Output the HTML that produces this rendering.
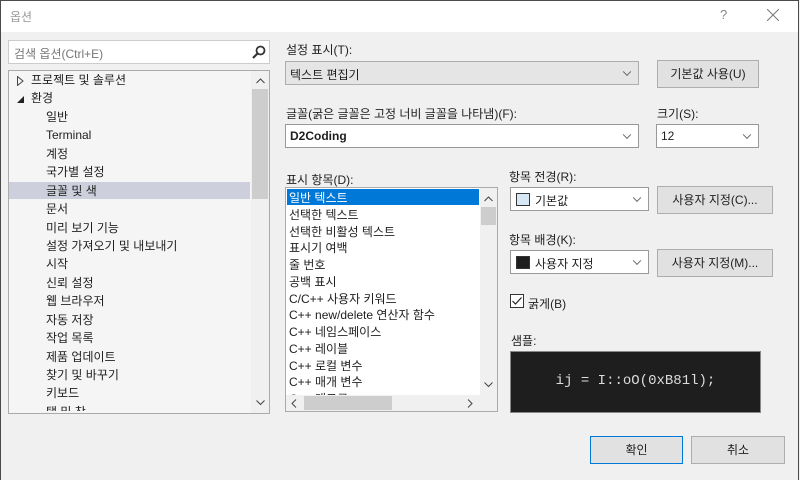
<!DOCTYPE html>
<html><head><meta charset="utf-8"><style>
*{box-sizing:border-box;margin:0;padding:0}
body{width:800px;height:480px;overflow:hidden;background:#f0f0f0;font-family:"Liberation Sans","Noto Sans CJK KR",sans-serif;font-size:12px;color:#1e1e1e;position:relative}
.a{position:absolute}
.frame{left:0;top:0;width:799px;height:480px;border:1px solid #4a4a4a;border-bottom:none}
.title{left:1px;top:1px;width:797px;height:31px;background:#fff}
.combo{background:#fff;border:1px solid #aaa}
.combo.g{background:#e5e5e5;border-color:#adadad}
.chev{position:absolute;right:8px;top:50%;width:6px;height:6px;border-right:1px solid #666;border-bottom:1px solid #666;transform:translateY(-70%) rotate(45deg)}
.btn{background:#e1e1e1;border:1px solid #adadad;text-align:center}
.lbl{white-space:nowrap}
.tree div{height:18.45px;line-height:18px;white-space:nowrap;overflow:hidden}
.list div{height:16.75px;line-height:16px;white-space:nowrap;padding-left:3px}
.sb{background:#f0f0f0}
.th{background:#cdcdcd}
</style></head><body>
<div class="a title"></div>
<div class="a frame"></div>
<div class="a lbl" style="left:10px;top:8px;color:#999;font-size:12px">옵션</div>
<div class="a" style="left:720px;top:7px;color:#888;font-size:13px">?</div>
<svg class="a" style="left:767px;top:9px" width="12" height="12"><path d="M0 0L12 12M12 0L0 12" stroke="#777" stroke-width="1"/></svg>

<div class="a combo" style="left:8px;top:40px;width:262px;height:24px;border-color:#ccc"></div>
<div class="a lbl" style="left:14px;top:45px;color:#777">검색 옵션(Ctrl+E)</div>
<svg class="a" style="left:252px;top:45px" width="14" height="14"><circle cx="8.5" cy="5.5" r="4" fill="none" stroke="#333" stroke-width="1.8"/><path d="M5.5 8.5L1 13" stroke="#333" stroke-width="2.2"/></svg>

<div class="a" style="left:8px;top:70px;width:262px;height:344px;background:#f5f5f5;border:1px solid #aaa"></div>
<div class="a" style="left:9px;top:182px;width:241px;height:17px;background:#cdd0dc"></div>
<div class="a sb" style="left:251px;top:71px;width:18px;height:342px"></div>
<div class="a th" style="left:252px;top:89px;width:16px;height:110px"></div>
<svg class="a" style="left:256px;top:78px" width="9" height="6"><path d="M0.5 5L4.5 1L8.5 5" fill="none" stroke="#444"/></svg>
<svg class="a" style="left:256px;top:400px" width="9" height="6"><path d="M0.5 0.5L4.5 4.5L8.5 0.5" fill="none" stroke="#444"/></svg>
<svg class="a" style="left:17px;top:76px" width="7" height="10"><path d="M0.5 0.5L6 5L0.5 9.5Z" fill="none" stroke="#444"/></svg>
<svg class="a" style="left:17px;top:96px" width="7" height="7"><path d="M7 0L7 7L0 7Z" fill="#222"/></svg>
<div class="a tree" style="left:31px;top:71px;width:220px;height:340px;overflow:hidden">
<div>프로젝트 및 솔루션</div><div>환경</div>
<div style="padding-left:15px">일반</div><div style="padding-left:15px">Terminal</div><div style="padding-left:15px">계정</div><div style="padding-left:15px">국가별 설정</div><div style="padding-left:15px">글꼴 및 색</div><div style="padding-left:15px">문서</div><div style="padding-left:15px">미리 보기 기능</div><div style="padding-left:15px">설정 가져오기 및 내보내기</div><div style="padding-left:15px">시작</div><div style="padding-left:15px">신뢰 설정</div><div style="padding-left:15px">웹 브라우저</div><div style="padding-left:15px">자동 저장</div><div style="padding-left:15px">작업 목록</div><div style="padding-left:15px">제품 업데이트</div><div style="padding-left:15px">찾기 및 바꾸기</div><div style="padding-left:15px">키보드</div><div style="padding-left:15px">탭 및 창</div>
</div>

<div class="a lbl" style="left:286px;top:41px">설정 표시(T):</div>
<div class="a combo g" style="left:285px;top:61px;width:354px;height:24px"><span style="position:absolute;left:4px;top:4px">텍스트 편집기</span><i class="chev"></i></div>
<div class="a btn" style="left:657px;top:60px;width:102px;height:28px;line-height:26px">기본값 사용(U)</div>

<div class="a lbl" style="left:286px;top:105px">글꼴(굵은 글꼴은 고정 너비 글꼴을 나타냄)(F):</div>
<div class="a combo" style="left:285px;top:124px;width:354px;height:24px;border-color:#999"><b style="position:absolute;left:4px;top:4px">D2Coding</b><i class="chev"></i></div>
<div class="a lbl" style="left:657px;top:105px">크기(S):</div>
<div class="a combo" style="left:656px;top:124px;width:103px;height:24px;border-color:#999"><span style="position:absolute;left:4px;top:4px">12</span><i class="chev"></i></div>

<div class="a lbl" style="left:286px;top:171px">표시 항목(D):</div>
<div class="a" style="left:285px;top:187px;width:213px;height:225px;background:#fff;border:1px solid #aaa"></div>
<div class="a" style="left:287px;top:189px;width:192px;height:16px;background:#0078d7"></div>
<div class="a list" style="left:286px;top:190px;width:194px;height:205px;overflow:hidden">
<div style="color:#fff">일반 텍스트</div><div>선택한 텍스트</div><div>선택한 비활성 텍스트</div><div>표시기 여백</div><div>줄 번호</div><div>공백 표시</div><div>C/C++ 사용자 키워드</div><div>C++ new/delete 연산자 함수</div><div>C++ 네임스페이스</div><div>C++ 레이블</div><div>C++ 로컬 변수</div><div>C++ 매개 변수</div><div>C++ 매크로</div>
</div>
<div class="a sb" style="left:480px;top:188px;width:17px;height:207px"></div>
<div class="a th" style="left:481px;top:207px;width:15px;height:18px"></div>
<svg class="a" style="left:484px;top:196px" width="9" height="6"><path d="M0.5 5L4.5 1L8.5 5" fill="none" stroke="#444"/></svg>
<svg class="a" style="left:484px;top:382px" width="9" height="6"><path d="M0.5 0.5L4.5 4.5L8.5 0.5" fill="none" stroke="#444"/></svg>
<div class="a sb" style="left:286px;top:395px;width:211px;height:16px"></div>
<div class="a th" style="left:304px;top:396px;width:88px;height:14px"></div>
<svg class="a" style="left:291px;top:399px" width="6" height="9"><path d="M5 0.5L1 4.5L5 8.5" fill="none" stroke="#444"/></svg>
<svg class="a" style="left:467px;top:399px" width="6" height="9"><path d="M1 0.5L5 4.5L1 8.5" fill="none" stroke="#444"/></svg>

<div class="a lbl" style="left:509px;top:168px">항목 전경(R):</div>
<div class="a combo" style="left:510px;top:187px;width:139px;height:24px;border-color:#999"><span style="position:absolute;left:5px;top:5px;width:14px;height:13px;background:#d6e8f5;border:1px solid #333"></span><span style="position:absolute;left:24px;top:4px">기본값</span><i class="chev"></i></div>
<div class="a btn" style="left:657px;top:186px;width:116px;height:28px;line-height:26px">사용자 지정(C)...</div>

<div class="a lbl" style="left:509px;top:231px">항목 배경(K):</div>
<div class="a combo" style="left:510px;top:250px;width:139px;height:24px;border-color:#999"><span style="position:absolute;left:5px;top:5px;width:14px;height:13px;background:#1e1e1e;border:1px solid #333"></span><span style="position:absolute;left:24px;top:4px">사용자 지정</span><i class="chev"></i></div>
<div class="a btn" style="left:657px;top:249px;width:116px;height:28px;line-height:26px">사용자 지정(M)...</div>

<div class="a" style="left:510px;top:294px;width:14px;height:14px;background:#fff;border:1px solid #333"></div>
<svg class="a" style="left:512px;top:297px" width="10" height="8"><path d="M0.5 4L3.5 7L9.5 0.5" fill="none" stroke="#222" stroke-width="1.2"/></svg>
<div class="a lbl" style="left:528px;top:295px">굵게(B)</div>

<div class="a lbl" style="left:511px;top:332px">샘플:</div>
<div class="a" style="left:510px;top:351px;width:251px;height:62px;background:#1e1e1e;border:1px solid #888"></div>
<div class="a lbl" style="left:510px;top:373px;width:251px;text-align:center;color:#dcdcdc;font-family:'Liberation Mono',monospace;font-size:14px">ij = I::oO(0xB81l);</div>

<div class="a btn" style="left:590px;top:436px;width:93px;height:28px;line-height:26px;border-color:#0078d7">확인</div>
<div class="a btn" style="left:691px;top:436px;width:94px;height:28px;line-height:26px">취소</div>
</body></html>
